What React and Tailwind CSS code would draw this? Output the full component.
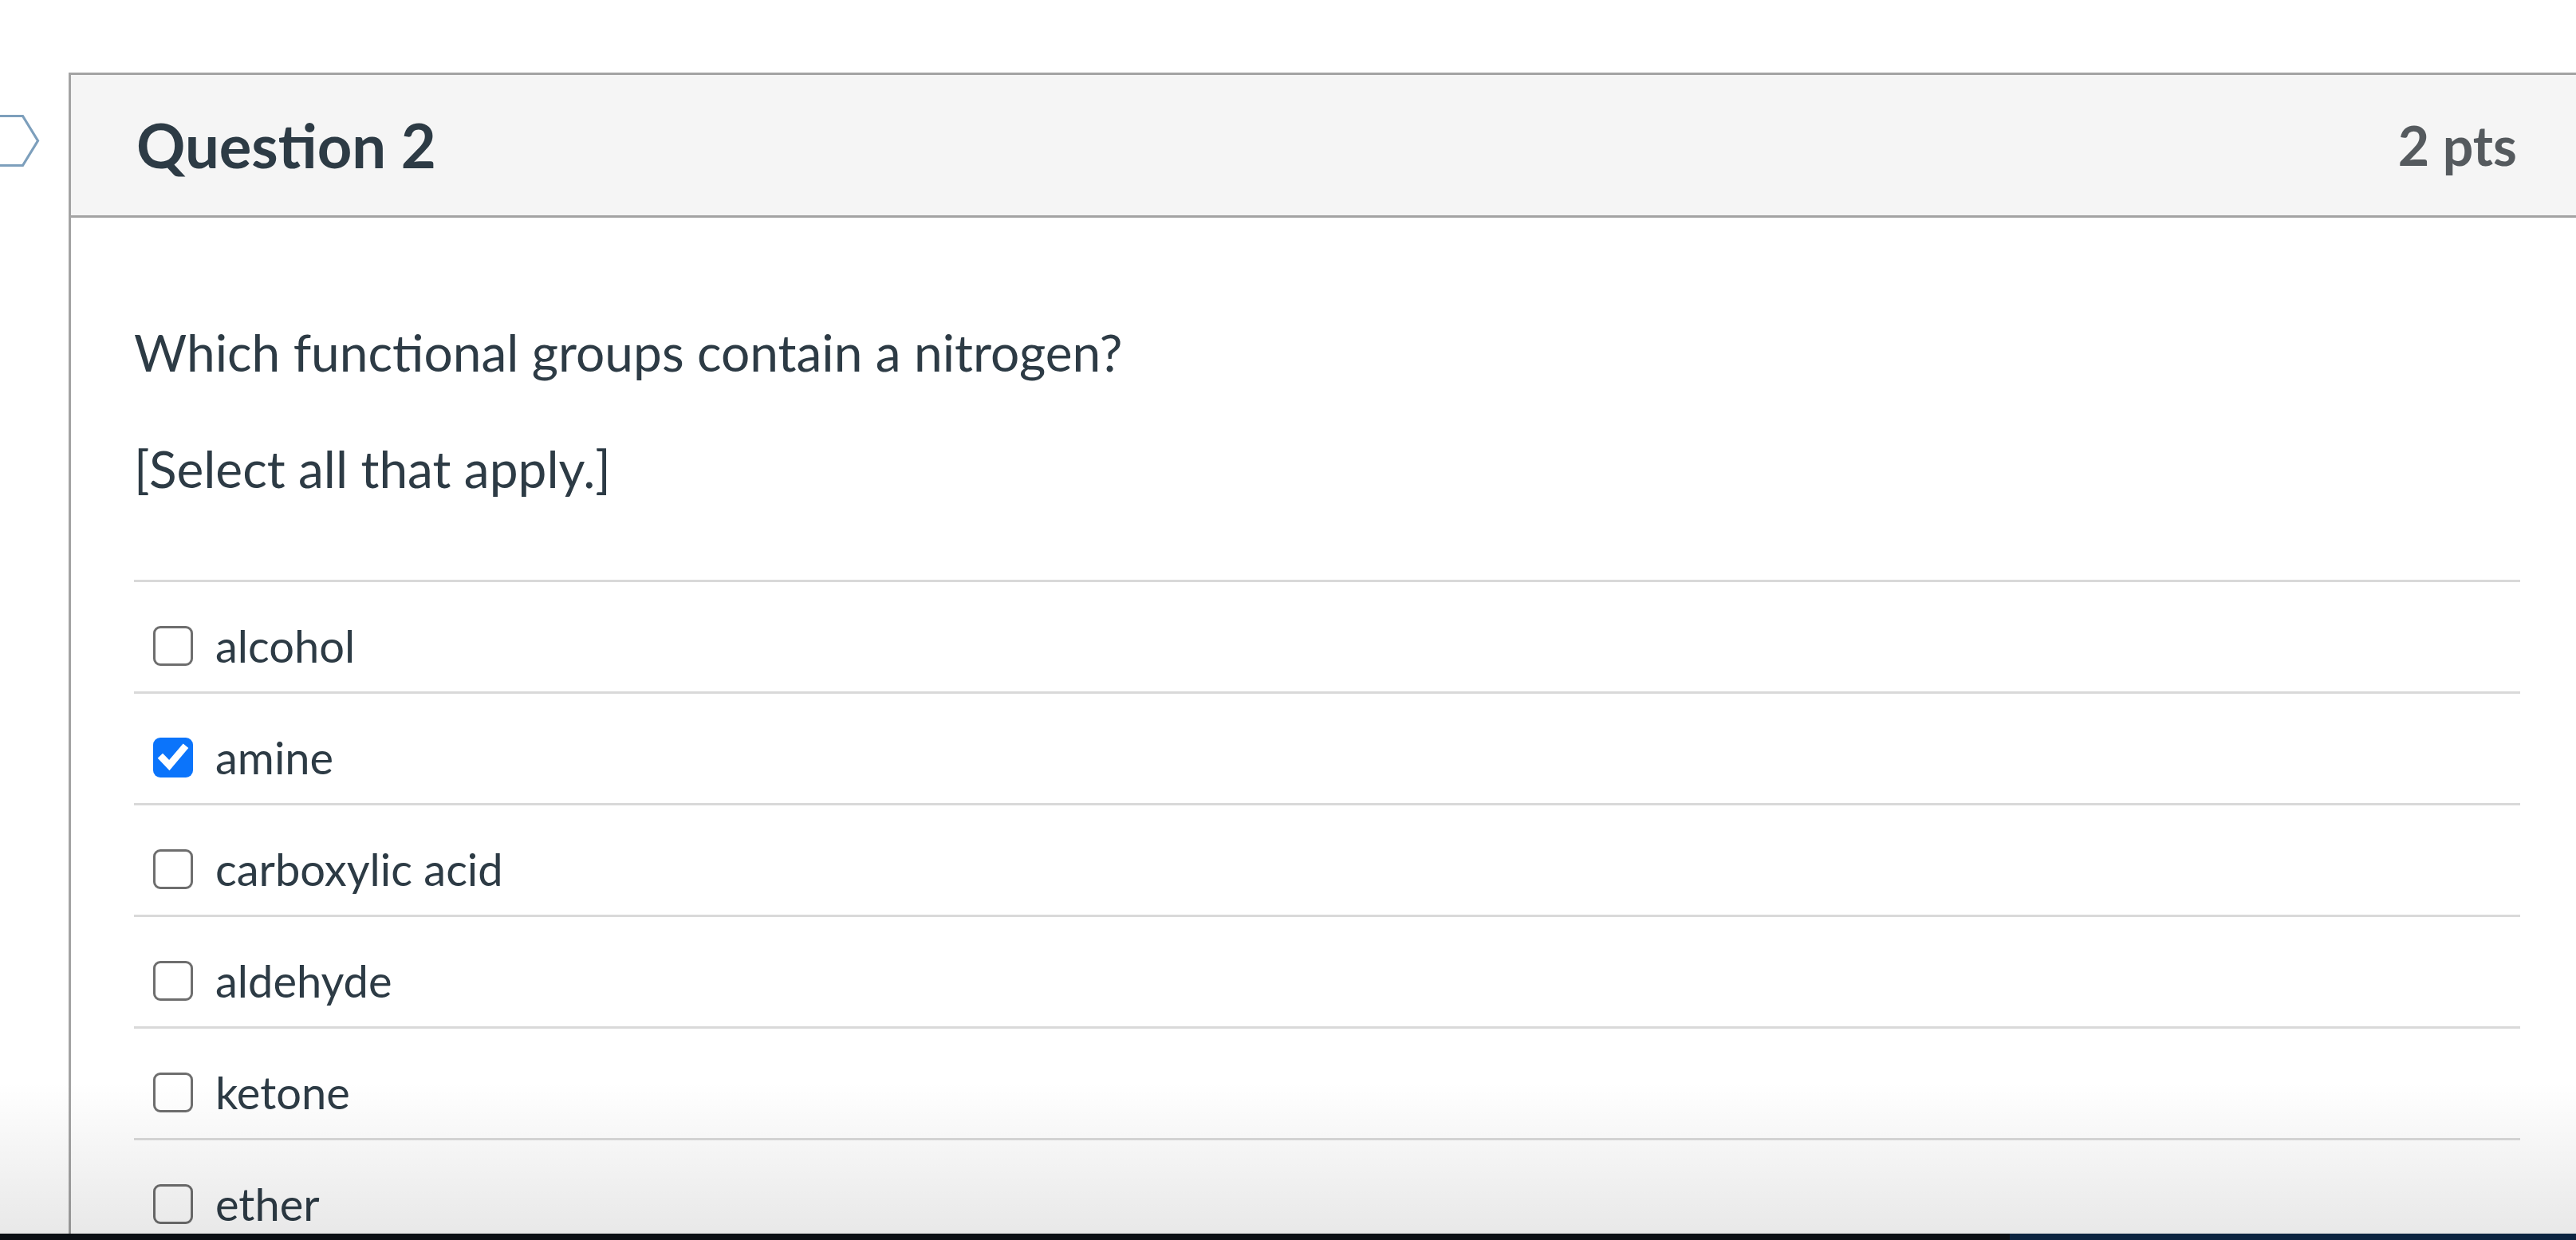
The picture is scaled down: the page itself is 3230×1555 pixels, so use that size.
import React, { useState } from 'react';

const OPTIONS = ['alcohol', 'amine', 'carboxylic acid', 'aldehyde', 'ketone', 'ether'];

const CheckBox = ({ checked }) =>
    checked ? (
        <span className="flex h-[50px] w-[50px] shrink-0 items-center justify-center rounded-[9px] bg-[#0b74fb]">
            <svg viewBox="0 0 24 24" className="h-[42px] w-[42px]" fill="none" stroke="white" strokeWidth="5" strokeLinecap="square">
                <path d="M4.5 12.5l4.8 5L19.5 5.5" />
            </svg>
        </span>
    ) : (
        <span className="h-[50px] w-[50px] shrink-0 rounded-[9px] border-[3px] border-[#6e6e6e] bg-white" />
    );

const App = () => {
    const [selected, setSelected] = useState(['amine']);

    const toggle = (name) =>
        setSelected((prev) => (prev.includes(name) ? prev.filter((n) => n !== name) : [...prev, name]));

    return (
        <div className="relative h-[1555px] w-[3230px] overflow-hidden bg-white font-['Lato','Open_Sans',sans-serif] text-[#2d3b45]">
            {/* question flag on the left */}
            <svg className="absolute left-0 top-[143px]" width="52" height="68" viewBox="0 0 52 68">
                <path d="M-20 2.5H28.5L47.5 33.5L28.5 64.5H-20" fill="white" stroke="#7d9fbc" strokeWidth="3.2" />
            </svg>

            <div className="ml-[86px] mt-[91px] border-l-[3px] border-t-[3px] border-[#a3a3a3]">
                {/* header */}
                <div className="flex h-[179px] items-center justify-between border-b-[3px] border-[#a3a3a3] bg-[#f5f5f5] pl-[82px] pr-[74px]">
                    <h2 className="text-[76px] font-bold leading-none">Question 2</h2>
                    <div className="text-[68px] font-bold leading-none text-[#555a5e]">2 pts</div>
                </div>

                {/* body */}
                <div className="pl-[79px] pr-[70px]">
                    <p className="mt-[133px] text-[64px] leading-[72px]">Which functional groups contain a nitrogen?</p>
                    <p className="mt-[74px] text-[64px] leading-[72px]">[Select all that apply.]</p>

                    <div className="mt-[103px]">
                        {OPTIONS.map((name) => (
                            <label
                                key={name}
                                className="flex h-[140px] cursor-pointer items-center gap-[28px] border-t-[3px] border-[#d9d9d9] pl-[24px] pt-[22px]"
                                onClick={() => toggle(name)}
                            >
                                <CheckBox checked={selected.includes(name)} />
                                <span className="text-[56px] leading-none">{name}</span>
                            </label>
                        ))}
                    </div>
                </div>
            </div>

            {/* page fade at the bottom of the window */}
            <div className="pointer-events-none absolute bottom-[8px] left-0 h-[190px] w-full bg-gradient-to-b from-transparent to-black/[0.09]" />

            {/* dock strip */}
            <div className="absolute bottom-0 left-0 flex h-[8px] w-full">
                <div className="w-[2520px] bg-[#0b0f14]" />
                <div className="flex-1 bg-[#0b2340]" />
            </div>
        </div>
    );
};

export default App;
